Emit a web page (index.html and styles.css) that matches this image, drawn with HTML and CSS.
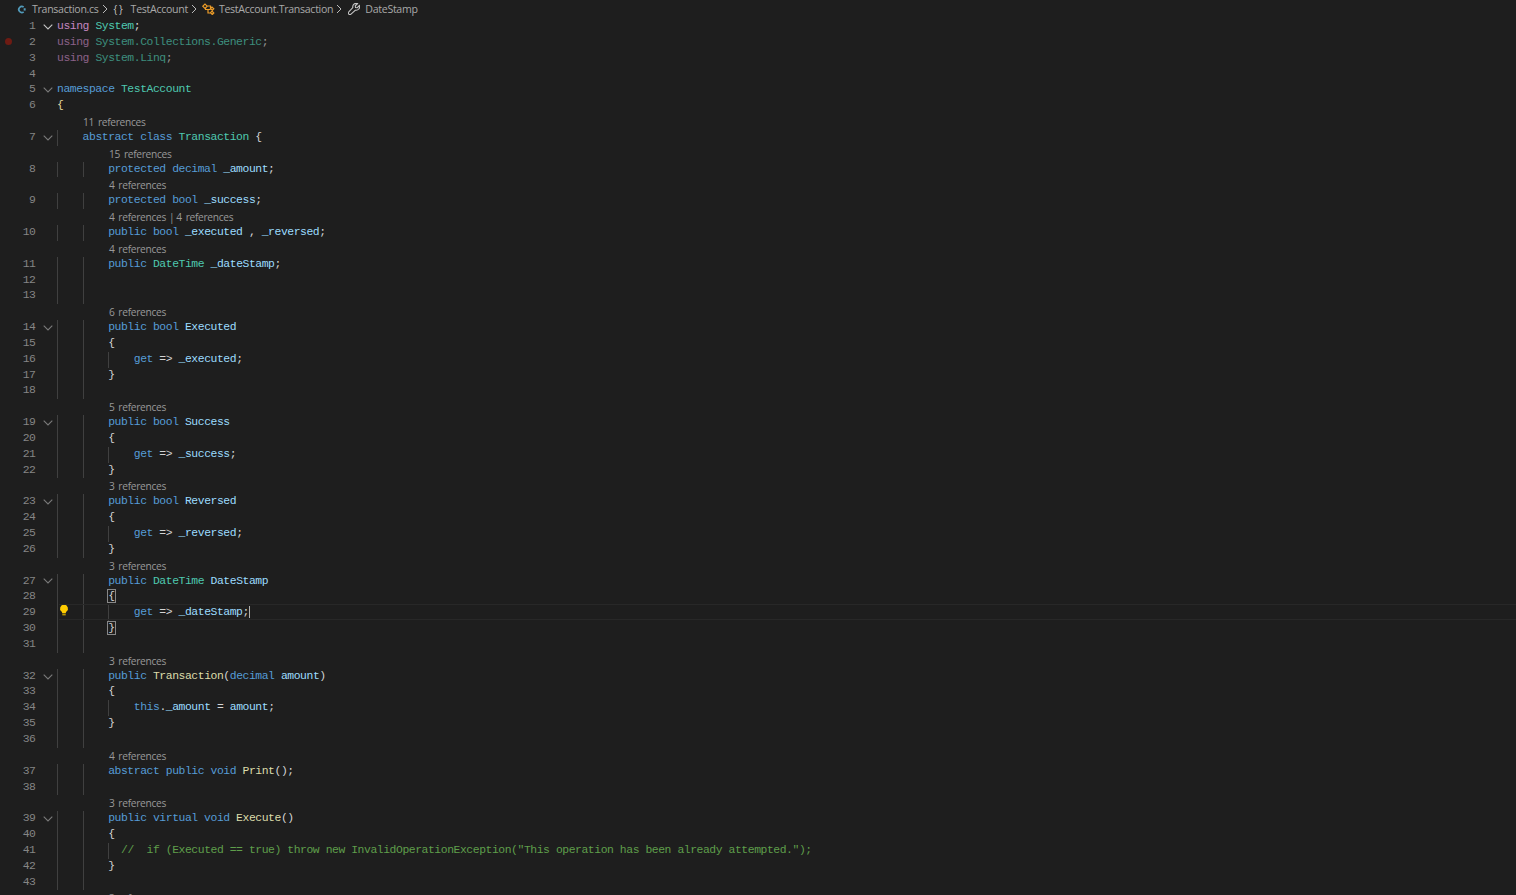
FILE: index.html
```html
<!DOCTYPE html>
<html lang="en">
<head>
<meta charset="utf-8">
<title>Transaction.cs</title>
<link rel="stylesheet" href="styles.css">
</head>
<body>
<nav class="crumbs">
  <svg class="ic ic-cs" viewBox="0 0 10 10"><path d="M7.400 2.400A3.300 3.300 0 1 0 7.400 7.600" fill="none" stroke="#519aba" stroke-width="2"/><rect x="7.400" y="3.600" width="2.200" height="2.600" fill="#519aba"/></svg>
  <span class="c-t c1">Transaction.cs</span>
  <svg class="sep" viewBox="0 0 6 10"><path d="M1 1l4 4-4 4" fill="none" stroke="#bbb" stroke-width="1"/></svg>
  <span class="c-b">{ }</span>
  <span class="c-t">TestAccount</span>
  <svg class="sep" viewBox="0 0 6 10"><path d="M1 1l4 4-4 4" fill="none" stroke="#bbb" stroke-width="1"/></svg>
  <svg class="ic ic-cl" viewBox="0 0 13 12"><path d="M.8 3.200L3 1l2.200 2.200L3 5.400zM8.500 5.500l1.500-1.500 1.800 1.800-1.500 1.500zM8.500 9.700l1.500-1.500 1.800 1.800-1.500 1.500zM3.500 5v1.500h5M6 6.500v3.500h2.500M5 3h3.500v2" fill="none" stroke="#ee9d28" stroke-width="1.200"/></svg>
  <span class="c-t">TestAccount.Transaction</span>
  <svg class="sep" viewBox="0 0 6 10"><path d="M1 1l4 4-4 4" fill="none" stroke="#bbb" stroke-width="1"/></svg>
  <svg class="ic ic-wr" viewBox="0 0 12 12"><path d="M7.500 7.200a3.500 3.500 0 0 0 3.900-4.700L9.200 4.700 7.500 4.500 7.300 2.800 9.500.6A3.500 3.500 0 0 0 4.800 4.500L.8 8.900a1.500 1.500 0 0 0 2.200 2.200z" fill="none" stroke="#c5c5c5" stroke-width="1.100"/></svg>
  <span class="c-t">DateStamp</span>
</nav>
<main class="editor">
<div class="row"><span class="gut"><span class="ln">1</span><span class="fold on"><svg viewBox="0 0 10 6"><path d="M.7.7L5 5 9.300.7"/></svg></span></span><code class="code"><span class="pu">using</span> <span class="ty">System</span>;</code></div>
<div class="row"><span class="gut"><span class="bp"></span><span class="ln">2</span><span class="fold"></span></span><code class="code dim"><span class="pu">using</span> <span class="ty">System.Collections.Generic</span>;</code></div>
<div class="row"><span class="gut"><span class="ln">3</span><span class="fold"></span></span><code class="code dim"><span class="pu">using</span> <span class="ty">System.Linq</span>;</code></div>
<div class="row"><span class="gut"><span class="ln">4</span><span class="fold"></span></span><code class="code"></code></div>
<div class="row"><span class="gut"><span class="ln">5</span><span class="fold"><svg viewBox="0 0 10 6"><path d="M.7.7L5 5 9.300.7"/></svg></span></span><code class="code"><span class="kw">namespace</span> <span class="ty">TestAccount</span></code></div>
<div class="row"><span class="gut"><span class="ln">6</span><span class="fold"></span></span><code class="code"><span class="br">{</span></code></div>
<div class="lens l1">11 references</div>
<div class="row"><span class="gut"><span class="ln">7</span><span class="fold"><svg viewBox="0 0 10 6"><path d="M.7.7L5 5 9.300.7"/></svg></span></span><i class="ig"></i><code class="code"><span class="kw">abstract class</span> <span class="ty">Transaction</span> {</code></div>
<div class="lens l2">15 references</div>
<div class="row"><span class="gut"><span class="ln">8</span><span class="fold"></span></span><i class="ig"></i><i class="ig"></i><code class="code"><span class="kw">protected decimal</span> <span class="fd">_amount</span>;</code></div>
<div class="lens l2">4 references</div>
<div class="row"><span class="gut"><span class="ln">9</span><span class="fold"></span></span><i class="ig"></i><i class="ig"></i><code class="code"><span class="kw">protected bool</span> <span class="fd">_success</span>;</code></div>
<div class="lens l2">4 references<span class="bar">|</span>4 references</div>
<div class="row"><span class="gut"><span class="ln">10</span><span class="fold"></span></span><i class="ig"></i><i class="ig"></i><code class="code"><span class="kw">public bool</span> <span class="fd">_executed</span> , <span class="fd">_reversed</span>;</code></div>
<div class="lens l2">4 references</div>
<div class="row"><span class="gut"><span class="ln">11</span><span class="fold"></span></span><i class="ig"></i><i class="ig"></i><code class="code"><span class="kw">public</span> <span class="ty">DateTime</span> <span class="fd">_dateStamp</span>;</code></div>
<div class="row"><span class="gut"><span class="ln">12</span><span class="fold"></span></span><i class="ig"></i><i class="ig"></i><code class="code"></code></div>
<div class="row"><span class="gut"><span class="ln">13</span><span class="fold"></span></span><i class="ig"></i><i class="ig"></i><code class="code"></code></div>
<div class="lens l2">6 references</div>
<div class="row"><span class="gut"><span class="ln">14</span><span class="fold"><svg viewBox="0 0 10 6"><path d="M.7.7L5 5 9.300.7"/></svg></span></span><i class="ig"></i><i class="ig"></i><code class="code"><span class="kw">public bool</span> <span class="fd">Executed</span></code></div>
<div class="row"><span class="gut"><span class="ln">15</span><span class="fold"></span></span><i class="ig"></i><i class="ig"></i><code class="code">{</code></div>
<div class="row"><span class="gut"><span class="ln">16</span><span class="fold"></span></span><i class="ig"></i><i class="ig"></i><i class="ig"></i><code class="code"><span class="kw">get</span> =&gt; <span class="fd">_executed</span>;</code></div>
<div class="row"><span class="gut"><span class="ln">17</span><span class="fold"></span></span><i class="ig"></i><i class="ig"></i><code class="code">}</code></div>
<div class="row"><span class="gut"><span class="ln">18</span><span class="fold"></span></span><i class="ig"></i><i class="ig"></i><code class="code"></code></div>
<div class="lens l2">5 references</div>
<div class="row"><span class="gut"><span class="ln">19</span><span class="fold"><svg viewBox="0 0 10 6"><path d="M.7.7L5 5 9.300.7"/></svg></span></span><i class="ig"></i><i class="ig"></i><code class="code"><span class="kw">public bool</span> <span class="fd">Success</span></code></div>
<div class="row"><span class="gut"><span class="ln">20</span><span class="fold"></span></span><i class="ig"></i><i class="ig"></i><code class="code">{</code></div>
<div class="row"><span class="gut"><span class="ln">21</span><span class="fold"></span></span><i class="ig"></i><i class="ig"></i><i class="ig"></i><code class="code"><span class="kw">get</span> =&gt; <span class="fd">_success</span>;</code></div>
<div class="row"><span class="gut"><span class="ln">22</span><span class="fold"></span></span><i class="ig"></i><i class="ig"></i><code class="code">}</code></div>
<div class="lens l2">3 references</div>
<div class="row"><span class="gut"><span class="ln">23</span><span class="fold"><svg viewBox="0 0 10 6"><path d="M.7.7L5 5 9.300.7"/></svg></span></span><i class="ig"></i><i class="ig"></i><code class="code"><span class="kw">public bool</span> <span class="fd">Reversed</span></code></div>
<div class="row"><span class="gut"><span class="ln">24</span><span class="fold"></span></span><i class="ig"></i><i class="ig"></i><code class="code">{</code></div>
<div class="row"><span class="gut"><span class="ln">25</span><span class="fold"></span></span><i class="ig"></i><i class="ig"></i><i class="ig"></i><code class="code"><span class="kw">get</span> =&gt; <span class="fd">_reversed</span>;</code></div>
<div class="row"><span class="gut"><span class="ln">26</span><span class="fold"></span></span><i class="ig"></i><i class="ig"></i><code class="code">}</code></div>
<div class="lens l2">3 references</div>
<div class="row"><span class="gut"><span class="ln">27</span><span class="fold"><svg viewBox="0 0 10 6"><path d="M.7.7L5 5 9.300.7"/></svg></span></span><i class="ig"></i><i class="ig"></i><code class="code"><span class="kw">public</span> <span class="ty">DateTime</span> <span class="fd">DateStamp</span></code></div>
<div class="row"><span class="gut"><span class="ln">28</span><span class="fold"></span></span><i class="ig"></i><i class="ig"></i><code class="code"><span class="match">{</span></code></div>
<div class="row active"><span class="gut"><span class="ln">29</span><span class="fold"></span></span><i class="ig"><svg class="bulb" viewBox="0 0 10 12"><path d="M5 .5a4 4 0 0 0-2.500 7.100c.5.5.7 1 .7 1.600h3.600c0-.6.200-1.100.7-1.600A4 4 0 0 0 5 .5z" fill="#ffcc00"/><rect x="3.300" y="9.800" width="3.400" height="1.600" fill="#b89500"/></svg></i><i class="ig"></i><i class="ig"></i><code class="code"><span class="kw">get</span> =&gt; <span class="fd">_dateStamp</span><span class="caret">;</span></code></div>
<div class="row"><span class="gut"><span class="ln">30</span><span class="fold"></span></span><i class="ig"></i><i class="ig"></i><code class="code"><span class="match">}</span></code></div>
<div class="row"><span class="gut"><span class="ln">31</span><span class="fold"></span></span><i class="ig"></i><i class="ig"></i><code class="code"></code></div>
<div class="lens l2">3 references</div>
<div class="row"><span class="gut"><span class="ln">32</span><span class="fold"><svg viewBox="0 0 10 6"><path d="M.7.7L5 5 9.300.7"/></svg></span></span><i class="ig"></i><i class="ig"></i><code class="code"><span class="kw">public</span> <span class="mt">Transaction</span>(<span class="kw">decimal</span> <span class="fd">amount</span>)</code></div>
<div class="row"><span class="gut"><span class="ln">33</span><span class="fold"></span></span><i class="ig"></i><i class="ig"></i><code class="code">{</code></div>
<div class="row"><span class="gut"><span class="ln">34</span><span class="fold"></span></span><i class="ig"></i><i class="ig"></i><i class="ig"></i><code class="code"><span class="kw">this</span>.<span class="fd">_amount</span> = <span class="fd">amount</span>;</code></div>
<div class="row"><span class="gut"><span class="ln">35</span><span class="fold"></span></span><i class="ig"></i><i class="ig"></i><code class="code">}</code></div>
<div class="row"><span class="gut"><span class="ln">36</span><span class="fold"></span></span><i class="ig"></i><i class="ig"></i><code class="code"></code></div>
<div class="lens l2">4 references</div>
<div class="row"><span class="gut"><span class="ln">37</span><span class="fold"></span></span><i class="ig"></i><i class="ig"></i><code class="code"><span class="kw">abstract public void</span> <span class="mt">Print</span>();</code></div>
<div class="row"><span class="gut"><span class="ln">38</span><span class="fold"></span></span><i class="ig"></i><i class="ig"></i><code class="code"></code></div>
<div class="lens l2">3 references</div>
<div class="row"><span class="gut"><span class="ln">39</span><span class="fold"><svg viewBox="0 0 10 6"><path d="M.7.7L5 5 9.300.7"/></svg></span></span><i class="ig"></i><i class="ig"></i><code class="code"><span class="kw">public virtual void</span> <span class="mt">Execute</span>()</code></div>
<div class="row"><span class="gut"><span class="ln">40</span><span class="fold"></span></span><i class="ig"></i><i class="ig"></i><code class="code">{</code></div>
<div class="row"><span class="gut"><span class="ln">41</span><span class="fold"></span></span><i class="ig"></i><i class="ig"></i><i class="ig ig-short"></i><code class="code cm">//  if (Executed == true) throw new InvalidOperationException("This operation has been already attempted.");</code></div>
<div class="row"><span class="gut"><span class="ln">42</span><span class="fold"></span></span><i class="ig"></i><i class="ig"></i><code class="code">}</code></div>
<div class="row"><span class="gut"><span class="ln">43</span><span class="fold"></span></span><i class="ig"></i><i class="ig"></i><code class="code"></code></div>
<div class="lens l2">3 references</div>
</main>
</body>
</html>
```
FILE: styles.css
```css
* { box-sizing: border-box; }
html, body { margin: 0; height: 100%; overflow: hidden; background: #1e1e1e; }
body { width: 1516px; height: 895px; }
.crumbs { height: 18px; padding-left: 17px; display: flex; align-items: center; color: #a9a9a9; font: 10.6px/18px "Open Sans", sans-serif; letter-spacing: -0.3px; }
.ic { flex: none; display: block; }
.ic-cs { width: 9px; height: 9px; margin-right: 6px; }
.ic-cl { width: 13px; height: 12px; margin: 0 4px 0 5px; }
.ic-wr { width: 12px; height: 12px; margin: 0 5px 0 6px; }
.sep { width: 6px; height: 10px; flex: none; margin: 0 0 0 3px; }
.c-b { margin: 0 7px 0 6px; width: 10px; white-space: nowrap; color: #c5c5c5; font-size: 10px; letter-spacing: -0.5px; }
.editor { padding-top: 1px; }
.row { display: flex; height: 15.85px; position: relative; }
.gut { flex: none; width: 57px; display: flex; position: relative; }
.ln { width: 35.5px; text-align: right; color: #858585; font: 11.4px/15.85px "Liberation Mono", monospace; letter-spacing: -0.44px; }
.fold { width: 21.5px; display: flex; align-items: center; padding-left: 7px; }
.fold svg { width: 10px; height: 6px; fill: none; stroke: #7a7a7a; stroke-width: 1.100; }
.fold.on svg { stroke: #c5c5c5; }
.bp { position: absolute; left: 5px; top: 3px; width: 7px; height: 7px; border-radius: 50%; background: #6e1b13; }
.ig { flex: none; width: 25.6px; border-left: 1px solid #404040; position: relative; display: block; }
.ig-short { width: 12.800px; }
.code { white-space: pre; color: #d4d4d4; font: 11.4px/15.85px "Liberation Mono", monospace; letter-spacing: -0.44px; }
.dim { opacity: .65; }
.pu { color: #c586c0; }
.kw { color: #569cd6; }
.ty { color: #4ec9b0; }
.fd { color: #9cdcfe; }
.mt { color: #dcdcaa; }
.br { color: #e6d9a0; }
.cm { color: #5f9e4b; }
.lens { height: 15.85px; padding-top: 1px; color: #999; font: 10.2px/15.85px "Open Sans", sans-serif; letter-spacing: -0.3px; word-spacing: 1.500px; white-space: nowrap; }
.bar { margin: 0 2px 0 3px; }
.l1 { padding-left: 83px; }
.l2 { padding-left: 109px; }
.active::after { content: ""; position: absolute; left: 59px; right: 0; top: -1px; bottom: 1px; border-top: 1px solid #282828; border-bottom: 1px solid #282828; pointer-events: none; }
.match { outline: 1px solid #888; outline-offset: 0; }
.caret { border-right: 1px solid #aeafad; }
.bulb { position: absolute; left: 1px; top: -1px; width: 10px; height: 12px; }
```
